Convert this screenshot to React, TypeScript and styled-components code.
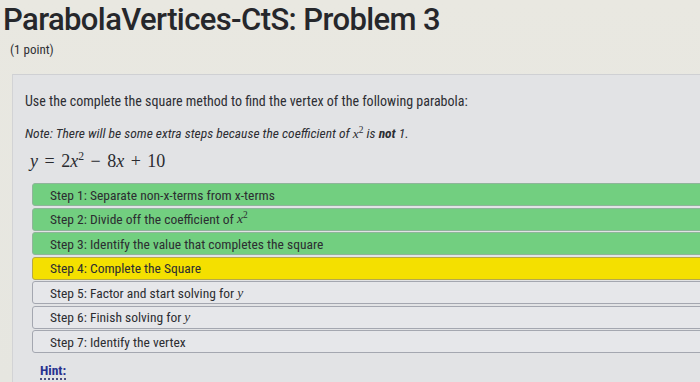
import styled, { createGlobalStyle } from 'styled-components'

// ─── Data ─────────────────────────────────────────────────────────────────────

type StepState = 'done' | 'current' | 'pending'

interface Step {
  label: string
  math?: string
  state: StepState
}

const steps: Step[] = [
  { label: 'Step 1: Separate non-x-terms from x-terms', state: 'done' },
  { label: 'Step 2: Divide off the coefficient of ', math: 'x2', state: 'done' },
  { label: 'Step 3: Identify the value that completes the square', state: 'done' },
  { label: 'Step 4: Complete the Square', state: 'current' },
  { label: 'Step 5: Factor and start solving for ', math: 'y', state: 'pending' },
  { label: 'Step 6: Finish solving for ', math: 'y', state: 'pending' },
  { label: 'Step 7: Identify the vertex', state: 'pending' },
]

const NARROW = `"Liberation Sans Narrow", "Roboto Condensed", "DejaVu Sans Condensed", Roboto, sans-serif`

// ─── Component ────────────────────────────────────────────────────────────────

function MathVar({ v }: { v: string }) {
  if (v === 'x2') {
    return (
      <MathText>
        x<sup>2</sup>
      </MathText>
    )
  }
  return <MathText>{v}</MathText>
}

export default function App() {
  return (
    <>
      <GlobalStyle />
      <Page>
        <Header>
          <Title>ParabolaVertices-CtS: Problem 3</Title>
          <Points>(1 point)</Points>
        </Header>

        <Panel>
          <Prompt>Use the complete the square method to find the vertex of the following parabola:</Prompt>
          <Note>
            Note: There will be some extra steps because the coefficient of <MathVar v="x2" /> is{' '}
            <strong>not</strong> 1.
          </Note>
          <Equation>
            <i>y</i> = 2<i>x</i>
            <sup>2</sup> − 8<i>x</i> + 10
          </Equation>

          <StepList>
            {steps.map((s) => (
              <StepButton key={s.label} $state={s.state} type="button">
                {s.label}
                {s.math && <MathVar v={s.math} />}
              </StepButton>
            ))}
          </StepList>

          <Hint>Hint:</Hint>
        </Panel>
      </Page>
    </>
  )
}

// ─── Styles ───────────────────────────────────────────────────────────────────

const GlobalStyle = createGlobalStyle`
  html, body {
    margin: 0;
    padding: 0;
    background: #e8e7df;
  }
  * { box-sizing: border-box; }
`

const Page = styled.div`
  width: 700px;
  height: 382px;
  overflow: hidden;
  background: linear-gradient(180deg, #e9e8e1 0%, #e6e6e0 100%);
  font-family: ${NARROW};
  color: #2b2c30;
  display: flex;
  flex-direction: column;
`

const Header = styled.div`
  padding: 4px 0 0 3px;
  height: 74px;
`

const Title = styled.h1`
  margin: 0;
  font-family: Roboto, "Liberation Sans", sans-serif;
  font-weight: 500;
  font-size: 31px;
  line-height: 32px;
  letter-spacing: -0.6px;
  color: #26272b;
`

const Points = styled.div`
  margin: 6px 0 0 7px;
  font-size: 13px;
  color: #2f3034;
`

const Panel = styled.section`
  flex: 1;
  margin-left: 12px;
  background: #e2e3e5;
  border-top: 1px solid #cfd0d3;
  border-left: 1px solid #d2d3d5;
  padding: 17px 0 0 12px;
  display: flex;
  flex-direction: column;
`

const Prompt = styled.p`
  margin: 0;
  font-size: 14px;
  line-height: 18px;
  color: #2d2e33;
`

const Note = styled.p`
  margin: 14px 0 0;
  font-size: 13.5px;
  line-height: 18px;
  font-style: italic;
  color: #2d2e33;

  strong {
    font-weight: 700;
  }
`

const MathText = styled.span`
  font-family: "Liberation Serif", "DejaVu Serif", serif;
  font-style: italic;

  sup {
    font-style: normal;
    font-size: 0.7em;
    line-height: 0;
  }
`

const Equation = styled.div`
  margin: 8px 0 0 5px;
  font-family: "Liberation Serif", "DejaVu Serif", serif;
  font-size: 18px;
  line-height: 20px;
  word-spacing: 2px;
  color: #2a2b30;

  sup {
    font-size: 0.65em;
    line-height: 0;
  }
`

const StepList = styled.div`
  margin: 12px -8px 0 7px;
  display: flex;
  flex-direction: column;
  gap: 1.5px;
`

const stepColors: Record<StepState, { bg: string; border: string }> = {
  done: { bg: '#72cf80', border: '#8fb59a' },
  current: { bg: '#f4e000', border: '#b5a84a' },
  pending: { bg: '#e6e7ea', border: '#a4a7b0' },
}

const StepButton = styled.button<{ $state: StepState }>`
  display: flex;
  align-items: center;
  gap: 3px;
  height: 23px;
  padding: 0 0 0 17px;
  border: 1px solid ${({ $state }) => stepColors[$state].border};
  border-radius: 3px;
  background: ${({ $state }) => stepColors[$state].bg};
  font-family: ${NARROW};
  font-size: 13.5px;
  color: #2c2d31;
  text-align: left;
  cursor: pointer;
`

const Hint = styled.span`
  margin: 10px 0 0 15px;
  align-self: flex-start;
  font-size: 13.5px;
  font-weight: 700;
  color: #27318f;
  border-bottom: 2px dotted #4a4f80;
  line-height: 15px;
`
